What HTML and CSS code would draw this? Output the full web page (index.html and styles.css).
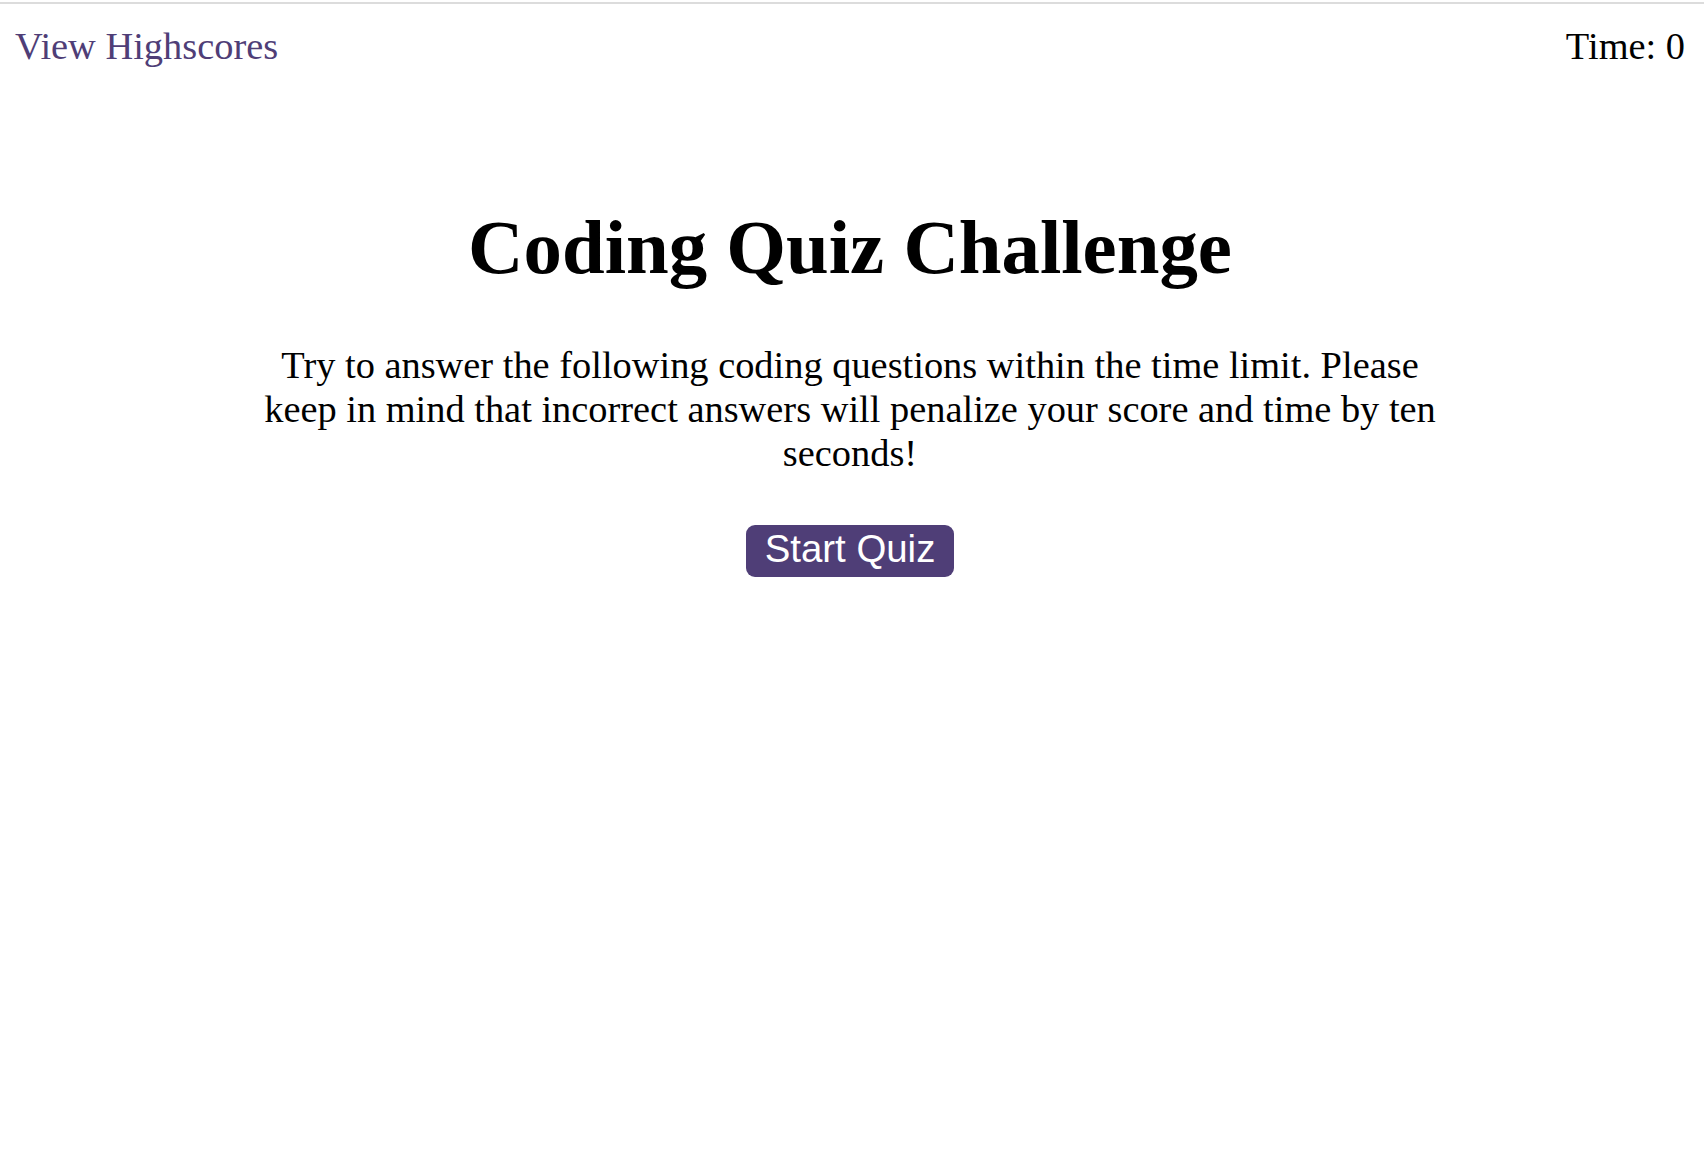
FILE: index.html
```html
<!DOCTYPE html>
<html lang="en">
<head>
<meta charset="utf-8">
<title>Coding Quiz Challenge</title>
<link rel="stylesheet" href="styles.css">
</head>
<body>
<div class="topline"></div>
<div class="page">
  <header class="header">
    <a class="highscores" href="#">View Highscores</a>
    <span class="timer">Time: 0</span>
  </header>
  <main class="intro">
    <h1 class="title">Coding Quiz Challenge</h1>
    <p class="desc">Try to answer the following coding questions within the time limit. Please keep in mind that incorrect answers will penalize your score and time by ten seconds!</p>
    <button class="start" type="button">Start Quiz</button>
  </main>
</div>
</body>
</html>
```

FILE: styles.css
```css
html, body {
  margin: 0;
  padding: 0;
  background: #ffffff;
}

body {
  font-family: "Liberation Serif", "Times New Roman", serif;
  font-size: 38.4px;
  color: #000000;
}

.topline {
  margin-top: 2px;
  height: 2px;
  background: #dcdcdc;
}

.page {
  padding: 0 19px 0 15px;
}

.header {
  display: flex;
  justify-content: space-between;
  align-items: baseline;
  padding-top: 20px;
  line-height: 44px;
}

.highscores {
  color: #4f3e77;
  text-decoration: none;
}

.timer {
  color: #000000;
}

.intro {
  display: flex;
  flex-direction: column;
  align-items: center;
  width: 1190px;
  margin: 0 auto;
  text-align: center;
}

.title {
  margin: 136px 0 0;
  font-size: 76.8px;
  font-weight: bold;
  line-height: 88px;
}

.desc {
  margin: 51px 0 0;
  line-height: 44px;
}

.start {
  margin-top: 50px;
  padding: 2px 19px 6px;
  border: none;
  border-radius: 9px;
  background: #4f3e77;
  color: #ffffff;
  font-family: "Liberation Sans", Arial, sans-serif;
  font-size: 38.4px;
  line-height: 44px;
  cursor: pointer;
}
```
